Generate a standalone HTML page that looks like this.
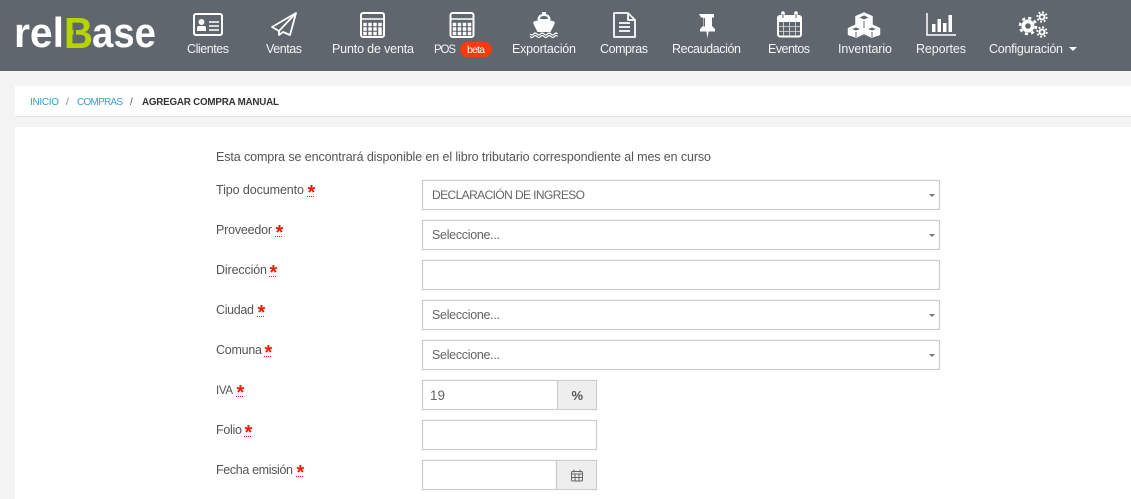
<!DOCTYPE html>
<html lang="es"><head><meta charset="utf-8"><title>relBase</title>
<style>
html,body{margin:0;padding:0;background:#f3f3f3;width:1131px;height:499px;overflow:hidden}
svg{display:block;font-family:"Liberation Sans",sans-serif}
.n{fill:#fff;font-size:12.5px;opacity:.93}
.l{fill:#555;font-size:12.5px}
.v{fill:#666;font-size:12.5px}
.s{fill:#fff;stroke:#ccc;stroke-width:1.2}
.r{fill:#f01800;font-size:20px;font-weight:bold}
.d{stroke:#f01800;stroke-width:1;stroke-dasharray:1 1}
.w{fill:none;stroke:#fff;stroke-width:2}
.f{fill:#fff}
.c{fill:#777}
</style></head><body>
<svg width="1131" height="499" viewBox="0 0 1131 499" xmlns="http://www.w3.org/2000/svg">
<rect width="1131" height="499" fill="#f3f3f3"/>
<rect width="1131" height="71" fill="#5f666e"/>
<!-- logo -->
<g font-weight="bold" font-size="42" fill="#fff">
<text x="14" y="47" textLength="50" lengthAdjust="spacingAndGlyphs">rel</text>
<text x="64" y="48" font-size="44" textLength="29" lengthAdjust="spacingAndGlyphs" fill="#b5d400">B</text>
<text x="92" y="47" textLength="64" lengthAdjust="spacingAndGlyphs">ase</text>
</g>
<rect x="73.500" y="30" width="2.500" height="6" fill="#5f666e"/>
<!-- nav labels -->
<text class="n" x="187" y="53" textLength="42">Clientes</text>
<text class="n" x="266" y="53" textLength="36">Ventas</text>
<text class="n" x="332" y="53" textLength="82">Punto de venta</text>
<text class="n" x="434" y="53" textLength="22" style="font-size:11.5px">POS</text>
<text class="n" x="512" y="53" textLength="64">Exportación</text>
<text class="n" x="600" y="53" textLength="48">Compras</text>
<text class="n" x="672" y="53" textLength="69">Recaudación</text>
<text class="n" x="768" y="53" textLength="42">Eventos</text>
<text class="n" x="838" y="53" textLength="54">Inventario</text>
<text class="n" x="916" y="53" textLength="50">Reportes</text>
<text class="n" x="989" y="53" textLength="74">Configuración</text>
<rect x="460" y="42" width="32" height="15" rx="7.5" fill="#f53c0c"/>
<text x="467" y="53" fill="#fff" font-size="10.5" textLength="18">beta</text>
<path d="M1069 47h8l-4 4z" fill="#fff"/>
<!-- Clientes -->
<rect x="194" y="14" width="28" height="21" rx="2" class="w"/>
<circle cx="201.5" cy="22" r="3" class="f"/>
<path d="M197 31v-3q0-2 2-2h5q2 0 2 2v3z" class="f"/>
<path d="M209 22h10M209 26h10M209 30h10" stroke="#fff" stroke-width="1.5"/>
<!-- Ventas -->
<path d="M296 13 272 27l7 4zM296 13l-17 18 0 4 4-3 7 3z" fill="none" stroke="#fff" stroke-width="1.8" stroke-linejoin="round"/>
<!-- Calculators -->
<g>
<rect x="361" y="13" width="23" height="24" rx="2" class="w"/>
<path d="M361 19h23" stroke="#fff" stroke-width="1.5"/>
<path stroke="#fff" stroke-width=".5" d="M363.500 23h3v3h-3zM368.500 23h3v3h-3zM373.500 23h3v3h-3zM378.500 23h3v3h-3zM363.500 27.500h3v3h-3zM368.500 27.500h3v3h-3zM373.500 27.500h3v3h-3zM363.500 32h3v3h-3zM368.500 32h3v3h-3zM373.500 32h3v3h-3zM378.500 27.500h3v7.500h-3z" class="f"/>
</g>
<g transform="translate(89.5 0)">
<rect x="361" y="13" width="23" height="24" rx="2" class="w"/>
<path d="M361 19h23" stroke="#fff" stroke-width="1.5"/>
<path stroke="#fff" stroke-width=".5" d="M363.500 23h3v3h-3zM368.500 23h3v3h-3zM373.500 23h3v3h-3zM378.500 23h3v3h-3zM363.500 27.500h3v3h-3zM368.500 27.500h3v3h-3zM373.500 27.500h3v3h-3zM378.500 27.500h3v3h-3zM363.500 32h3v3h-3zM368.500 32h3v3h-3zM373.500 32h3v3h-3zM378.500 32h3v3h-3z" class="f"/>
</g>
<!-- Ship -->
<rect x="542" y="12" width="4" height="3" class="f"/>
<path d="M537.500 20q0-6 6.500-6t6.500 6z" class="f"/>
<path d="M540 19q0-3 4-3t4 3z" fill="#5f666e"/>
<path d="M533 22q11-5 22 0l-1 3-3.500 7h-13l-3.500-7z" class="f"/>
<path d="M530 34q2 2 3.500 0t3.500 0 3.500 0 3.500 0 3.500 0 3.500 0 3.500 0 3 0M530 36.500q2 2 3.500 0t3.500 0 3.500 0 3.500 0 3.500 0 3.500 0 3.500 0 3 0" fill="none" stroke="#fff" stroke-width="1.200"/>
<!-- Doc -->
<path d="M614 13h14l7 7v17h-21zM628 13v7h7" fill="none" stroke="#fff" stroke-width="1.800" stroke-linejoin="round"/>
<path d="M619 23h11M619 27h11M619 31h11" stroke="#fff" stroke-width="1.800"/>
<!-- Pin -->
<path d="M699 14h15v3.500h-2v8.500l3 3v2.500h-6.500l-1 7-1-7h-6.500v-2.500l3-3v-8.500h-2z" class="f"/>
<path d="M703.500 18h1.500v8.500h-1.500z" fill="#5f666e"/>
<!-- Calendar -->
<rect x="778" y="16" width="23" height="20.500" rx="2" class="w"/>
<path d="M778 17h23v5h-23z" class="f"/>
<path d="M783 13v6M796 13v6" stroke="#fff" stroke-width="3.500" stroke-linecap="round"/>
<path d="M783 14v4M796 14v4" stroke="#5f666e" stroke-width="1"/>
<path d="M783.500 22v14M789.500 22v14M795.500 22v14M778 26.500h23M778 31.500h23" stroke="#fff" stroke-width=".8" opacity=".8"/>
<!-- Cubes -->
<path d="M864 13l8 3.500v8.500l7.500 3.500v6l-8 2.500-7.500-3.500-7.500 3.500-8-2.500v-6l7.500-3.500v-8.500z" class="f" stroke="#fff" stroke-width="1.500" stroke-linejoin="round"/>
<path d="M864 15.500l-4.500 2 4.500 2 4.500-2zM856 27.500l-4 1.500 4 1.500 4-1.500zM872 27.500l-4 1.500 4 1.500 4-1.500z" fill="#5f666e"/>
<path d="M864 21v7M856 32v5M872 32v5" stroke="#5f666e" stroke-width="1"/>
<!-- Chart -->
<path d="M927 13v22h29" fill="none" stroke="#fff" stroke-width="1.500"/>
<path d="M932 24h3.500v8h-3.500zM937.500 19h3.500v13h-3.500zM943 23h3.500v9h-3.500zM948.500 15h3.500v17h-3.500z" class="f"/>
<!-- Gears -->
<circle cx="1028" cy="26" r="6.500" class="f"/>
<circle cx="1028" cy="26" r="8" fill="none" stroke="#fff" stroke-width="2.5" stroke-dasharray="3.100 3.180"/>
<circle cx="1028" cy="26" r="2.800" fill="#5f666e"/>
<circle cx="1042" cy="17" r="3.500" class="f"/>
<circle cx="1042" cy="17" r="4.800" fill="none" stroke="#fff" stroke-width="1.800" stroke-dasharray="1.900 1.870"/>
<circle cx="1042" cy="17" r="1.500" fill="#5f666e"/>
<circle cx="1042" cy="32" r="3.500" class="f"/>
<circle cx="1042" cy="32" r="4.800" fill="none" stroke="#fff" stroke-width="1.800" stroke-dasharray="1.900 1.870"/>
<circle cx="1042" cy="32" r="1.500" fill="#5f666e"/>
<!-- Breadcrumb -->
<rect x="15" y="87" width="1116" height="30" fill="#e6e6e6"/>
<rect x="15" y="86" width="1116" height="30" fill="#fff"/>
<text x="30" y="105" fill="#3a9fc9" font-size="10" textLength="29">INICIO</text>
<text x="66" y="105" fill="#888" font-size="10">/</text>
<text x="77" y="105" fill="#3a9fc9" font-size="10" textLength="46">COMPRAS</text>
<text x="130" y="105" fill="#555" font-size="10">/</text>
<text x="142" y="105" fill="#333" font-size="9.800" font-weight="bold" textLength="137">AGREGAR COMPRA MANUAL</text>
<!-- Main card -->
<rect x="15" y="127" width="1116" height="372" fill="#fff"/>
<text class="l" x="216" y="161" textLength="495">Esta compra se encontrará disponible en el libro tributario correspondiente al mes en curso</text>
<!-- Labels -->
<text class="l" x="216" y="194" textLength="88">Tipo documento</text>
<text class="r" x="307.500" y="199">*</text><path class="d" d="M307 196.500h8"/>
<text class="l" x="216" y="234" textLength="56">Proveedor</text>
<text class="r" x="275.500" y="239">*</text><path class="d" d="M275 236.500h8"/>
<text class="l" x="216" y="274" textLength="51">Dirección</text>
<text class="r" x="269.500" y="279">*</text><path class="d" d="M269 276.500h8"/>
<text class="l" x="216" y="314" textLength="38">Ciudad</text>
<text class="r" x="257.500" y="319">*</text><path class="d" d="M257 316.500h8"/>
<text class="l" x="216" y="354" textLength="46">Comuna</text>
<text class="r" x="264.500" y="359">*</text><path class="d" d="M264 356.500h8"/>
<text class="l" x="216" y="394" textLength="17" style="font-size:11.5px">IVA</text>
<text class="r" x="236.500" y="399">*</text><path class="d" d="M236 396.500h8"/>
<text class="l" x="216" y="434" textLength="26">Folio</text>
<text class="r" x="244.500" y="439">*</text><path class="d" d="M244 436.500h8"/>
<text class="l" x="216" y="474" textLength="77">Fecha emisión</text>
<text class="r" x="296.500" y="479">*</text><path class="d" d="M296 476.500h8"/>
<!-- Selects -->
<rect class="s" x="422.500" y="180.500" width="517" height="29"/>
<text class="v" x="432" y="199" textLength="153" style="font-size:12px">DECLARACIÓN DE INGRESO</text>
<path class="c" d="M929 194h6l-3 3z"/>
<rect class="s" x="422.500" y="220.500" width="517" height="29"/>
<text class="v" x="432" y="239" textLength="68">Seleccione...</text>
<path class="c" d="M929 234h6l-3 3z"/>
<rect class="s" x="422.500" y="260.500" width="517" height="29"/>
<rect class="s" x="422.500" y="300.500" width="517" height="29"/>
<text class="v" x="432" y="319" textLength="68">Seleccione...</text>
<path class="c" d="M929 314h6l-3 3z"/>
<rect class="s" x="422.500" y="340.500" width="517" height="29"/>
<text class="v" x="432" y="359" textLength="68">Seleccione...</text>
<path class="c" d="M929 354h6l-3 3z"/>
<!-- IVA -->
<rect class="s" x="422.500" y="380.500" width="174" height="29"/>
<rect x="557.500" y="381" width="38.500" height="28" fill="#eee"/>
<path d="M557.500 381v28" stroke="#ccc" stroke-width="1.200"/>
<text x="571.500" y="400" fill="#555" font-size="13" font-weight="bold">%</text>
<text class="v" x="430" y="400" style="font-size:13.5px" textLength="15">19</text>
<!-- Folio -->
<rect class="s" x="422.500" y="420.500" width="174" height="29"/>
<!-- Fecha -->
<rect class="s" x="422.500" y="460.500" width="174" height="29"/>
<rect x="557" y="461" width="39" height="28" fill="#eee"/>
<path d="M556.500 461v28" stroke="#ccc" stroke-width="1.200"/>
<g fill="none" stroke="#666" stroke-width="1">
<rect x="571.500" y="471.500" width="11" height="9.500" rx="1"/>
<path d="M571.500 474h11M575 474v7M579 474v7M571.500 477.500h11M574 469.500v3M580 469.500v3"/>
</g>
</svg>
</body></html>
